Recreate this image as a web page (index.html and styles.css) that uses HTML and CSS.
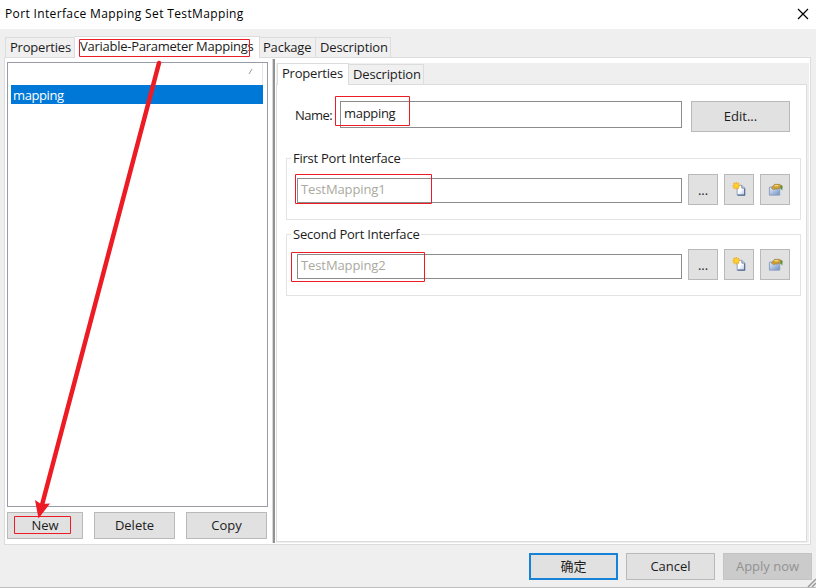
FILE: index.html
```
<!DOCTYPE html>
<html lang="en">
<head>
<meta charset="utf-8">
<title>Port Interface Mapping Set TestMapping</title>
<link rel="stylesheet" href="styles.css">
</head>
<body>
<svg class="defs" width="0" height="0" aria-hidden="true">
  <linearGradient id="paper" x1="0" y1="0" x2="1" y2="1"><stop offset=".45" stop-color="#fff"/><stop offset="1" stop-color="#b4c6e4"/></linearGradient>
  <linearGradient id="pane" x1="0" y1="0" x2="1" y2="1"><stop offset="0" stop-color="#e8f0fb"/><stop offset="1" stop-color="#6d8fc4"/></linearGradient>
  <symbol id="new-doc" viewBox="0 0 16 16">
    <path d="M5.500 3.500h5l3 3v7.500h-8z" fill="url(#paper)" stroke="#8c9dbb"/>
    <path d="M13.500 7v7H6" fill="none" stroke="#566c95" stroke-width="1.200"/>
    <path d="M10.500 3.500v3h3" fill="#c5d2e6" stroke="#7185aa"/>
    <path d="M4.500 0v8M.5 4h8M1.600 1.200l5.800 5.600M7.400 1.200L1.600 6.800" stroke="#f7b21a" stroke-width="1.600"/>
    <circle cx="4.500" cy="4" r="2.200" fill="#ffd52e"/>
  </symbol>
  <symbol id="edit-form" viewBox="0 0 16 16">
    <path d="M1.500 5.500h11v8.500h-11z" fill="url(#pane)" stroke="#8a9dbd"/>
    <path d="M4 5.500l3-3h5l3 1.500v2.500h-3l-2 1H8l-2 .5-2-1z" fill="#cf9f35" stroke="#94783c" stroke-width=".6"/>
    <path d="M7 4h4" stroke="#ffe284" stroke-width="1.200"/>
    <path d="M13.300 3.500l2 .8V9l-2-2z" fill="#55934b"/>
  </symbol>
</svg>
<header class="titlebar">
  <span>Port Interface Mapping Set TestMapping</span>
  <svg class="close" width="12" height="12" viewBox="0 0 12 12"><path d="M1 1l10 10M11 1L1 11" stroke="#000" stroke-width="1.200"/></svg>
</header>
<nav class="tabs outer-tabs">
  <span class="tab t-prop">Properties</span>
  <span class="tab t-map active">Variable-Parameter Mappings</span>
  <span class="tab t-pack">Package</span>
  <span class="tab t-desc">Description</span>
</nav>
<main class="sheet">
  <section class="left">
    <div class="list">
      <div class="list-head"><svg width="5" height="7" viewBox="0 0 5 7"><path d="M1 6l3-5" stroke="#999"/></svg></div>
      <div class="item">mapping</div>
    </div>
    <div class="list-buttons">
      <button class="b-new">New</button><button class="b-del">Delete</button><button class="b-copy">Copy</button>
    </div>
  </section>
  <div class="divider"></div>
  <section class="right">
    <nav class="tabs inner-tabs">
      <span class="tab i-prop active">Properties</span>
      <span class="tab i-desc">Description</span>
    </nav>
    <div class="form">
      <div class="name-row">
        <label>Name:</label>
        <div class="field name-field">mapping</div>
        <button class="edit">Edit...</button>
      </div>
      <section class="group">
        <h2 class="legend">First Port Interface</h2>
        <div class="group-row">
          <div class="field port">TestMapping1</div>
          <button class="small">...</button>
          <button class="small"><svg><use href="#new-doc"/></svg></button>
          <button class="small"><svg><use href="#edit-form"/></svg></button>
        </div>
      </section>
      <section class="group">
        <h2 class="legend second">Second Port Interface</h2>
        <div class="group-row raised">
          <div class="field port">TestMapping2</div>
          <button class="small">...</button>
          <button class="small"><svg><use href="#new-doc"/></svg></button>
          <button class="small"><svg><use href="#edit-form"/></svg></button>
        </div>
      </section>
    </div>
  </section>
</main>
<footer class="footer">
  <button class="ok">确定</button>
  <button>Cancel</button>
  <button class="off">Apply now</button>
</footer>
<svg class="notes" width="816" height="588" viewBox="0 0 816 588">
  <g fill="none" stroke="#ed1c24">
    <path d="M79.500 39.500h170v17h-170zM335.500 96.500h74v29h-74zM295.500 174.500h136v29h-136zM291.500 252.500h133v29h-133zM14.500 516.500h56v17h-56z"/>
    <path d="M159 63L42 505" stroke-width="4.500" stroke-linecap="round"/>
  </g>
  <path d="M38.500 518.500L35 500l6 4 9-.5z" fill="#ed1c24"/>
  <path d="M808 587l8-8M812 587l4-4" stroke="#999" stroke-width="1.500"/>
</svg>
</body>
</html>
```
FILE: styles.css
```
* { box-sizing: border-box; }
body {
  margin: 0; width: 816px; height: 588px; overflow: hidden; position: relative;
  display: flex; flex-direction: column;
  background: #efefef; border-bottom: 1px solid #bdbdbd;
  font: 13px/18px "Open Sans", "Noto Sans CJK SC", sans-serif; color: #1c1c1c;
  letter-spacing: -0.2px;
  white-space: nowrap;
}
.defs, .notes { position: absolute; left: 0; top: 0; pointer-events: none; }
button {
  font: inherit; letter-spacing: 0; color: inherit; background: #e1e1e1; border: 1px solid #b9b9b9;
  padding: 0 0 2px; margin: 0; display: flex; align-items: center; justify-content: center;
}
.titlebar {
  height: 29px; flex: none; background: #fff; color: #000; font-size: 12px; letter-spacing: 0.36px;
  display: flex; justify-content: space-between; align-items: center; padding: 0 7px 2px 5px;
}
.tabs { display: flex; align-items: flex-end; }
.tab {
  height: 20px; border: 1px solid #dcdcdc; border-bottom: 0; border-left-width: 0;
  padding-left: 4px; background: #f0f0f0;
}
.tab:first-child { border-left-width: 1px; }
.tab.active { background: #fff; height: 22px; margin-bottom: -1px; position: relative; }
.outer-tabs { height: 28px; flex: none; padding-left: 5px; }
.t-prop { width: 70px; }
.t-map { width: 185px; padding-left: 5px; letter-spacing: -0.26px; }
.t-pack { width: 56px; padding-left: 3px; }
.t-desc { width: 75px; letter-spacing: -0.15px; }
.sheet {
  width: 807px; height: 488px; flex: none; margin-left: 4px; background: #fff;
  border: 1px solid #dcdcdc; display: flex;
}
.left { width: 267px; padding: 4px 0 0 2px; }
.list { width: 261px; height: 445px; border: 1px solid #9a9ca5; padding: 0 4px 0 3px; }
.list-head {
  height: 22px; display: flex; justify-content: flex-end; padding: 5px 9px 0 0;
  border-right: 1px solid #e5e5e5;
}
.item { height: 19px; line-height: 20px; padding-left: 2px; background: #0078d7; color: #fff; letter-spacing: -0.4px; }
.list-buttons { display: flex; margin-top: 5px; gap: 11px; }
.list-buttons button { height: 27px; width: 81px; }
.list-buttons .b-new { width: 76px; }
.divider { width: 3px; height: 484px; margin-top: 1px; background: #929292; border-left: 1px solid #d8d8d8; }
.right { width: 533px; margin: 5px 0 0 1px; background: #efefef; height: 480px; }
.inner-tabs { height: 21px; padding-left: 1px; }
.i-prop { width: 72px; }
.i-desc { width: 75px; letter-spacing: -0.15px; }
.form { width: 531px; height: 458px; background: #fff; border: 1px solid #dcdcdc; padding: 16px 5px 0 9px; }
.name-row { display: flex; height: 57px; align-items: flex-start; }
.name-row label { width: 54px; padding: 5px 0 0 9px; letter-spacing: -0.5px; }
.field { border: 1px solid #8c8c8c; background: #fff; padding-left: 3px; flex: none; }
.name-field { width: 342px; height: 27px; line-height: 22px; letter-spacing: -0.3px; }
.edit { width: 99px; height: 31px; margin-left: 9px; padding-bottom: 1px; }
.group { width: 515px; height: 62px; border: 1px solid #e3e3e3; margin-bottom: 14px; padding: 0 0 0 10px; }
.legend {
  font: inherit; letter-spacing: -0.25px; margin: -10px 0 0 -6px; width: 111px; height: 18px; padding-left: 2px;
  background: #fff;
}
.legend.second { width: 130px; letter-spacing: -0.2px; }
.group-row { display: flex; margin-top: 7px; }
.port { width: 385px; height: 25px; line-height: 20px; margin: 4px 6px 0 0; color: #aaa9a0; letter-spacing: -0.1px; }
.raised { margin-top: 6px; }
.raised .port { margin-top: 5px; }
.small { width: 30px; height: 31px; margin-right: 6px; padding: 0; }
.small svg { width: 15px; height: 15px; }
.footer { display: flex; justify-content: flex-end; gap: 8px; padding: 8px 4px 0 0; }
.footer button { width: 89px; height: 27px; padding-bottom: 1px; }
.footer .ok { border: 2px solid #1683d8; }
.footer .off { background: #cbcbcb; border-color: #c4c4c4; color: #929292; }
```
